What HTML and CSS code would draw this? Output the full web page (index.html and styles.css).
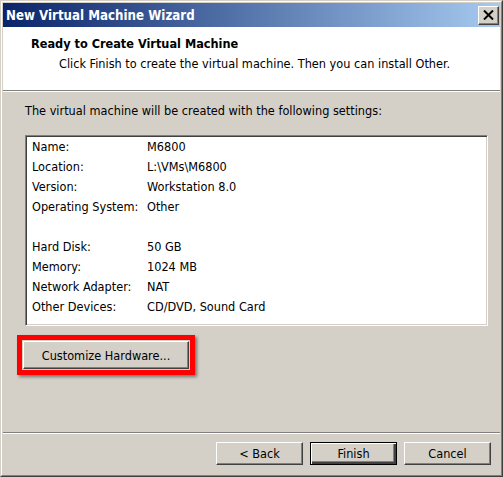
FILE: index.html
```html
<html>
<head>
<meta http-equiv="Content-Type" content="text/html; charset=utf-8" />
<title>New Virtual Machine Wizard</title>
<link rel="stylesheet" href="styles.css">
</head>
<body>
<div class="window">
  <div class="frame">
    <div class="titlebar">
      <span class="caption">New Virtual Machine Wizard</span>
      <span class="close">
        <svg width="11" height="10" viewBox="0 0 11 10"><path d="M1 0.5 L10 9.5 M10 0.5 L1 9.5" stroke="#000" stroke-width="2"/></svg>
      </span>
    </div>
    <header class="banner">
      <h1>Ready to Create Virtual Machine</h1>
      <p>Click Finish to create the virtual machine. Then you can install Other.</p>
    </header>
    <section class="content">
      <p class="intro">The virtual machine will be created with the following settings:</p>
      <div class="summary">
        <div class="row"><span class="label">Name:</span><span>M6800</span></div>
        <div class="row"><span class="label">Location:</span><span>L:\VMs\M6800</span></div>
        <div class="row"><span class="label">Version:</span><span>Workstation 8.0</span></div>
        <div class="row"><span class="label">Operating System:</span><span>Other</span></div>
        <div class="row"></div>
        <div class="row"><span class="label">Hard Disk:</span><span>50 GB</span></div>
        <div class="row"><span class="label">Memory:</span><span>1024 MB</span></div>
        <div class="row"><span class="label">Network Adapter:</span><span>NAT</span></div>
        <div class="row"><span class="label">Other Devices:</span><span>CD/DVD, Sound Card</span></div>
      </div>
      <div class="highlight">
        <button class="btn customize">Customize Hardware...</button>
      </div>
    </section>
    <footer class="buttons">
      <button class="btn">&lt; Back</button>
      <button class="btn default">Finish</button>
      <button class="btn">Cancel</button>
    </footer>
  </div>
</div>
</body>
</html>
```

FILE: styles.css
```css
body{
	margin:0;
	background:#d4d0c8;
	font-family:"DejaVu Sans Condensed", "DejaVu Sans", sans-serif;
	font-size:12.6px;
	color:#000;
}
.window{
	width:503px;
	height:477px;
	box-sizing:border-box;
	border:1px solid;
	border-color:#d4d0c8 #404040 #404040 #d4d0c8;
}
.frame{
	height:100%;
	box-sizing:border-box;
	border:1px solid;
	border-color:#fff #808080 #808080 #fff;
	padding:1px;
	display:flex;
	flex-direction:column;
}
.titlebar{
	height:24px;
	display:flex;
	align-items:center;
	justify-content:space-between;
	padding:0 1px 0 3px;
	background:linear-gradient(to right, #0a246a, #a6caf0);
}
.caption{
	color:#fff;
	font-weight:bold;
	font-size:13.2px;
}
.close{
	width:21px;
	height:19px;
	box-sizing:border-box;
	display:flex;
	align-items:center;
	justify-content:center;
	background:#d4d0c8;
	border:1px solid;
	border-color:#fff #404040 #404040 #fff;
	box-shadow:inset -1px -1px #808080;
}
.banner{
	height:64px;
	background:#fff;
	border-bottom:1px solid #808080;
	box-shadow:0 1px #fff;
	padding:9px 0 0 28px;
	box-sizing:border-box;
}
.banner h1{
	margin:0;
	font-size:12.6px;
	line-height:16px;
}
.banner p{
	margin:4px 0 0 28px;
	line-height:16px;
}
.content{
	flex:1;
	padding:12px 12px 0 22px;
}
.intro{
	margin:0;
	line-height:16px;
}
.summary{
	margin-top:16px;
	height:191px;
	box-sizing:border-box;
	background:#fff;
	border:1px solid;
	border-color:#808080 #fff #fff #808080;
	box-shadow:inset 1px 1px #404040, inset -1px -1px #d4d0c8;
	padding:1px 6px 6px 6px;
}
.row{
	height:20px;
	line-height:20px;
	display:flex;
}
.label{
	width:115px;
}
.highlight{
	margin:9px 0 0 -8px;
	width:178px;
	box-sizing:border-box;
	border:5px solid #ff0000;
	padding:1px;
	box-shadow:2px 2px 3px rgba(0,0,0,0.45);
}
.btn{
	font:inherit;
	color:#000;
	background:#d4d0c8;
	border:1px solid;
	border-color:#fff #404040 #404040 #fff;
	box-shadow:inset -1px -1px #808080;
	width:87px;
	height:23px;
	padding:0;
}
.customize{
	width:166px;
	height:28px;
	display:block;
}
.buttons{
	border-top:1px solid #808080;
	box-shadow:inset 0 1px #fff;
	padding:9px 9px 9px 0;
	display:flex;
	justify-content:flex-end;
	gap:7px;
}
.btn.default{
	border-color:#000;
	box-shadow:inset 1px 1px #fff, inset -2px -2px #404040, inset -3px -3px #808080;
}
```
